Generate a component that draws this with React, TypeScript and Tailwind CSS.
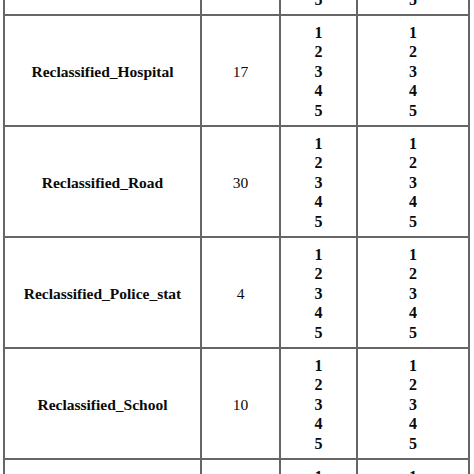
const rows = [
  { name: '', count: '' },
  { name: 'Reclassified_Hospital', count: '17' },
  { name: 'Reclassified_Road', count: '30' },
  { name: 'Reclassified_Police_stat', count: '4' },
  { name: 'Reclassified_School', count: '10' },
  { name: '', count: '' },
];

const levels = [1, 2, 3, 4, 5];

function Levels() {
  return (
    <div className="flex flex-col items-center font-bold text-[16px] leading-[19.5px]">
      {levels.map(n => (
        <span key={n}>{n}</span>
      ))}
    </div>
  );
}

export default function App() {
  return (
    <div className="w-[474px] h-[474px] overflow-hidden bg-white text-[#0a0a0a]" style={{ fontFamily: '"Liberation Serif", "Times New Roman", serif' }}>
      <table className="ml-[3px] mt-[-97px] border-collapse table-fixed">
        <colgroup>
          <col className="w-[197px]" />
          <col className="w-[79px]" />
          <col className="w-[77px]" />
          <col className="w-[112px]" />
        </colgroup>
        <tbody>
          {rows.map((row, i) => (
            <tr key={i} className="h-[111px]">
              <td className="border-2 border-[#666] text-center font-bold text-[15.5px] p-0 pt-[2px]">
                {row.name}
              </td>
              <td className="border-2 border-[#666] text-center text-[15.5px] p-0 pt-[2px]">
                {row.count}
              </td>
              <td className="border-2 border-[#666] p-0 pt-[2px]">
                <Levels />
              </td>
              <td className="border-2 border-[#666] p-0 pt-[2px]">
                <Levels />
              </td>
            </tr>
          ))}
        </tbody>
      </table>
    </div>
  );
}
